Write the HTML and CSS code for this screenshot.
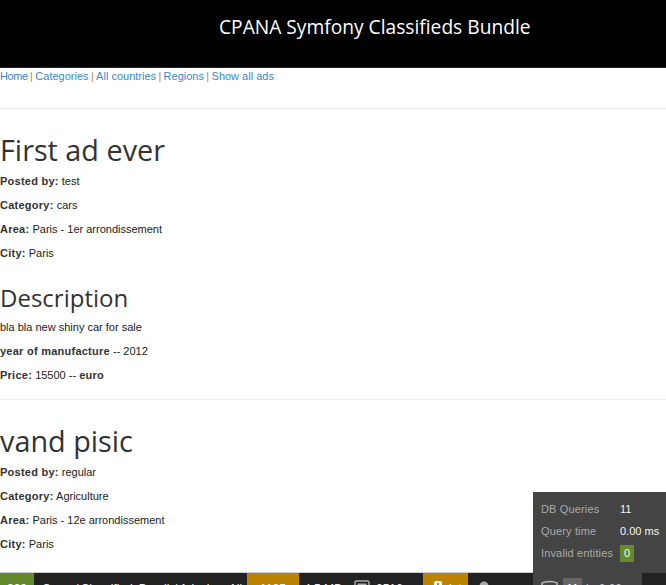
FILE: index.html
```html
<!DOCTYPE html>
<html lang="en">
<head>
<meta charset="utf-8">
<title>CPANA Symfony Classifieds Bundle</title>
<link rel="stylesheet" href="styles.css">
</head>
<body>
<header class="banner"><h1 class="banner-title">CPANA Symfony Classifieds Bundle</h1></header>
<nav class="nav"><a href="#">Home</a> | <a href="#">Categories</a> | <a href="#">All countries</a> | <a href="#">Regions</a> | <a href="#">Show all ads</a></nav>
<hr class="rule">
<article class="ad">
  <h2 class="ad-title">First ad ever</h2>
  <p><b>Posted by:</b> test</p>
  <p><b>Category:</b> cars</p>
  <p><b>Area:</b> Paris - 1er arrondissement</p>
  <p><b>City:</b> Paris</p>
  <h3 class="ad-sub">Description</h3>
  <p>bla bla new shiny car for sale</p>
  <p><b>year of manufacture</b> -- 2012</p>
  <p><b>Price:</b> 15500 -- <b>euro</b></p>
</article>
<hr class="rule">
<article class="ad">
  <h2 class="ad-title">vand pisic</h2>
  <p><b>Posted by:</b> regular</p>
  <p><b>Category:</b> Agriculture</p>
  <p><b>Area:</b> Paris - 12e arrondissement</p>
  <p><b>City:</b> Paris</p>
</article>
<div class="toolbar">
  <div class="tb tb-status">200</div>
  <div class="tb tb-route">Cpana\ClassifiedsBundle\Ad::showAll</div>
  <div class="tb tb-time">1125</div>
  <div class="tb tb-mem">4.5 MB</div>
  <div class="tb tb-forms"><svg width="16" height="14" viewBox="0 0 16 14"><rect x="1" y="1" width="14" height="12" rx="1.5" fill="none" stroke="#aaa" stroke-width="1.5"/><rect x="3.5" y="3.5" width="9" height="8" fill="#aaa"/></svg><span class="tb-label">2516</span></div>
  <div class="tb tb-sec"><svg width="12" height="14" viewBox="0 0 12 14"><rect x="1" y="1" width="8" height="12" rx="2" fill="#fff"/><rect x="4" y="3" width="2" height="5" fill="#bb8400"/></svg><span class="tb-label">lot</span></div>
  <div class="tb tb-user"><svg width="12" height="14" viewBox="0 0 12 14"><circle cx="6" cy="5" r="4.5" fill="#aaa"/></svg></div>
  <div class="tb tb-db"><svg width="18" height="14" viewBox="0 0 18 14"><path d="M1 3 C5 1 13 1 16 3 L16 14 M1 3 L1 14" fill="none" stroke="#bbb" stroke-width="1.5"/></svg><span class="count">11</span><span class="tb-label in">in 0.00 ms</span></div>
</div>
<div class="panel">
  <div class="panel-row"><span class="panel-key">DB Queries</span><span class="panel-val">11</span></div>
  <div class="panel-row"><span class="panel-key">Query time</span><span class="panel-val">0.00 ms</span></div>
  <div class="panel-row"><span class="panel-key">Invalid entities</span><span class="panel-val badge">0</span></div>
</div>
</body>
</html>
```
FILE: styles.css
```css
html, body { margin: 0; padding: 0; }
body {
  font-family: "Liberation Sans", Arial, sans-serif;
  font-size: 11px;
  line-height: 14px;
  color: #222;
  background: #fff;
  height: 585px;
  overflow: hidden;
}
b { color: #333; letter-spacing: 0.25px; }
.banner {
  background: #000;
  height: 67px;
  border-bottom: 1px solid #222;
}
.banner-title {
  margin: 0;
  padding: 14px 0 0 219px;
  font: 400 19.2px/26px "Open Sans", sans-serif;
  color: #fff;
}
.nav { padding-top: 1px; height: 39px; color: #c87f30; word-spacing: -0.7px; }
.nav a { color: #3a87cf; text-decoration: none; word-spacing: 0; }
.nav a:first-child { letter-spacing: -0.4px; }
.rule { margin: 0; border: 0; border-top: 1px solid #eee; }
.ad-title {
  margin: 0 0 4px;
  padding-top: 20px;
  font: 400 28.8px/41px "Open Sans", sans-serif;
  color: #333;
}
.ad-sub {
  margin: 0 0 5px;
  padding-top: 11px;
  font: 400 24px/34px "Open Sans", sans-serif;
  color: #333;
}
.ad p { margin: 0 0 10px; }
.ad { padding-bottom: 7px; }
.toolbar {
  position: fixed;
  left: 0;
  right: 0;
  top: 572px;
  height: 36px;
  display: flex;
  background: #222;
  border-top: 1px solid #ccc;
  color: #eee;
  font: 12px/32px "Liberation Sans", Arial, sans-serif;
}
.tb { height: 36px; white-space: nowrap; flex: none; box-sizing: border-box; }
.tb-label { margin-top: -7px; }
.tb-status { width: 34px; background: #648a2c; color: #fff; font-weight: 700; text-align: center; }
.tb-route { width: 213px; padding-left: 8px; overflow: hidden; }
.tb-time { width: 52px; background: #bb8400; color: #fff; text-align: center; }
.tb-mem { width: 55px; padding-left: 5px; }
.tb-forms { width: 69px; display: flex; align-items: flex-start; gap: 6px; padding-top: 7px; }
.tb-sec { width: 45px; background: #bb8400; color: #fff; display: flex; align-items: flex-start; gap: 4px; padding: 7px 0 0 10px; }
.tb-user { width: 65px; display: flex; align-items: flex-start; padding: 8px 0 0 10px; }
.tb-db { width: 109px; background: #444; display: flex; align-items: flex-start; padding: 7px 0 0 8px; color: #bbb; }
.count { margin: -2px 0 0 4px; width: 19px; height: 24px; background: #666; color: #fff; text-align: center; line-height: 22px; }
.in { margin-left: 4px; }
.panel {
  position: fixed;
  left: 533px;
  top: 492px;
  width: 133px;
  height: 81px;
  box-sizing: border-box;
  background: #444;
  padding: 6px 0 0 8px;
}
.panel-row { display: flex; height: 22px; align-items: center; }
.panel-key { width: 79px; color: #aaa; letter-spacing: 0.15px; white-space: nowrap; }
.panel-val { color: #f5f5f5; }
.badge { background: #648a2c; width: 14px; height: 17px; line-height: 17px; text-align: center; }
```
